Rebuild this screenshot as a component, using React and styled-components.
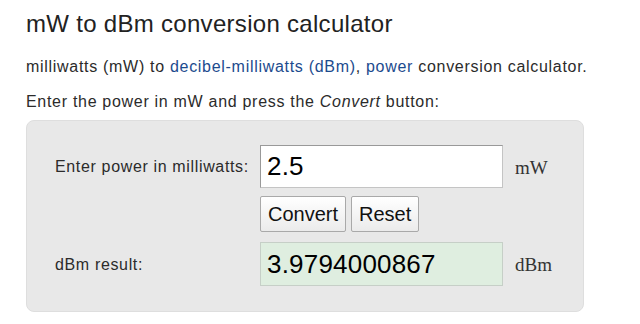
import React, { useState } from "react";
import styled, { createGlobalStyle } from "styled-components";

const GlobalStyle = createGlobalStyle`
  html, body {
    margin: 0;
    padding: 0;
    background: #fff;
  }
  body {
    font-family: "Liberation Sans", Arial, sans-serif;
    color: #333;
  }
`;

const Page = styled.div`
  padding: 0 26px;
  width: 640px;
  box-sizing: border-box;
`;

const Title = styled.h1`
  margin: 10px 0 0;
  font-size: 24px;
  line-height: 28px;
  font-weight: normal;
  letter-spacing: 0.3px;
  color: #222;
`;

const Text = styled.p`
  margin: ${(p) => p.top}px 0 0;
  font-size: 16px;
  line-height: 22px;
  letter-spacing: 0.7px;
  color: #2b2b2b;
  white-space: nowrap;
`;

const Link = styled.a`
  color: #1c4b8e;
  text-decoration: none;
`;

const Panel = styled.div`
  margin-top: 7px;
  width: 558px;
  box-sizing: border-box;
  padding: 24px 0 25px 28px;
  background: #e8e8e8;
  border: 1px solid #dedede;
  border-radius: 8px;
  display: grid;
  grid-template-columns: 195px 243px auto;
  column-gap: 10px;
  align-items: center;
`;

const Label = styled.label`
  font-size: 16px;
  letter-spacing: 0.65px;
  color: #2b2b2b;
  padding-top: 1px;
`;

const Field = styled.input`
  box-sizing: border-box;
  width: 243px;
  height: ${(p) => (p.result ? 44 : 43)}px;
  padding: 0 6px;
  font-family: "Liberation Sans", Arial, sans-serif;
  font-size: 26px;
  letter-spacing: 0.2px;
  color: #000;
  background: ${(p) => (p.result ? "#dfeee0" : "#fff")};
  border: 1px solid ${(p) => (p.result ? "#c6cfc7" : "#c4c4c4")};
  border-top-color: ${(p) => (p.result ? "#c6cfc7" : "#999")};
  border-left-color: ${(p) => (p.result ? "#c6cfc7" : "#999")};
  border-radius: 0;
  outline: none;
`;

const Unit = styled.span`
  padding: 2px 0 0 2px;
  font-family: "Liberation Serif", "Times New Roman", serif;
  font-size: 19px;
  color: #333;
`;

const Buttons = styled.div`
  display: flex;
  gap: 5px;
  height: 36px;
  margin: 8px 0 10px;
`;

const Button = styled.button`
  box-sizing: border-box;
  height: 36px;
  padding: 0 7px;
  font-family: "Liberation Sans", Arial, sans-serif;
  font-size: 20px;
  color: #111;
  background: linear-gradient(#ffffff, #ebebeb);
  border: 1px solid #a9a9a9;
  border-radius: 2px;
  cursor: pointer;
`;

const Empty = styled.span``;

export default function App() {
  const [mw, setMw] = useState("2.5");
  const [dbm, setDbm] = useState("3.9794000867");

  const convert = () => {
    const v = parseFloat(mw);
    if (v > 0) setDbm((10 * Math.log10(v)).toFixed(10));
  };

  const reset = () => {
    setMw("");
    setDbm("");
  };

  return (
    <Page>
      <GlobalStyle />
      <Title>mW to dBm conversion calculator</Title>
      <Text top={18}>
        milliwatts (mW) to <Link href="#">decibel-milliwatts (dBm)</Link>,{" "}
        <Link href="#">power</Link> conversion calculator.
      </Text>
      <Text top={13}>
        Enter the power in mW and press the <i>Convert</i> button:
      </Text>
      <Panel>
        <Label>Enter power in milliwatts:</Label>
        <Field value={mw} onChange={(e) => setMw(e.target.value)} />
        <Unit>mW</Unit>
        <Empty />
        <Buttons>
          <Button onClick={convert}>Convert</Button>
          <Button onClick={reset}>Reset</Button>
        </Buttons>
        <Empty />
        <Label>dBm result:</Label>
        <Field result value={dbm} readOnly />
        <Unit>dBm</Unit>
      </Panel>
    </Page>
  );
}
